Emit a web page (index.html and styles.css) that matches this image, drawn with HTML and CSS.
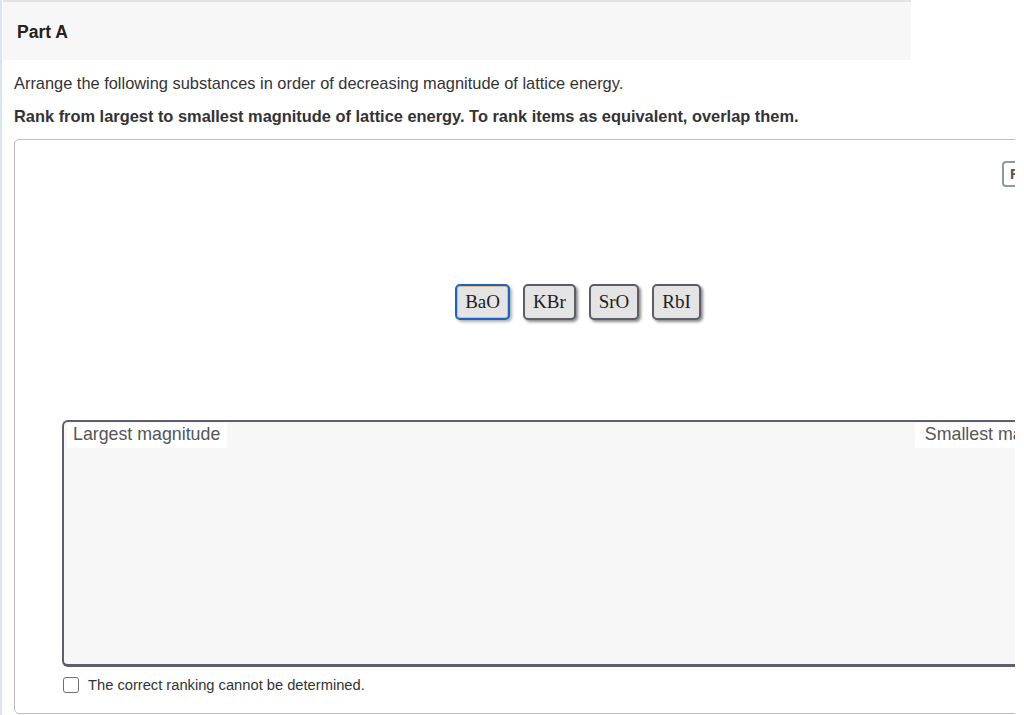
FILE: index.html
```html
<!DOCTYPE html>
<html>
<head>
<meta charset="utf-8">
<link rel="stylesheet" href="styles.css">
</head>
<body>
<div class="frame">
  <div class="part-header">Part A</div>
  <p class="prompt">Arrange the following substances in order of decreasing magnitude of lattice energy.</p>
  <p class="instr">Rank from largest to smallest magnitude of lattice energy. To rank items as equivalent, overlap them.</p>
  <div class="rank-box">
    <div class="toolbar"><span class="tool-btn">F</span></div>
    <div class="tiles">
      <span class="tile focused">BaO</span>
      <span class="tile">KBr</span>
      <span class="tile">SrO</span>
      <span class="tile">RbI</span>
    </div>
    <div class="dropzone">
      <span class="zlabel">Largest magnitude</span>
      <span class="zlabel right">Smallest magnitude</span>
    </div>
    <label class="check-row"><span class="checkbox"></span><span>The correct ranking cannot be determined.</span></label>
  </div>
</div>
</body>
</html>
```
FILE: styles.css
```css
html, body {
  margin: 0;
  padding: 0;
  background: #fff;
}
body {
  font-family: "Liberation Sans", Arial, sans-serif;
  color: #333;
}
.frame {
  width: 1013px;
  height: 715px;
  border-left: 2px solid #d9e6f2;
  overflow: hidden;
}
.part-header {
  margin-left: 1px;
  width: 894px;
  height: 58px;
  border-top: 2px solid #e4e4e4;
  background: #f7f7f7;
  padding-left: 14px;
  font-weight: bold;
  font-size: 17.5px;
  color: #222;
  line-height: 60px;
}
.prompt {
  margin: 13px 0 0 12px;
  font-size: 16.4px;
  line-height: 20px;
  color: #333;
}
.instr {
  margin: 13px 0 0 12px;
  font-size: 16.4px;
  line-height: 20px;
  font-weight: bold;
  color: #333;
}
.rank-box {
  margin: 13px 0 0 12px;
  width: 1126px;
  height: 573px;
  border: 1px solid #bdbdbd;
  border-radius: 5px;
  display: flex;
  flex-direction: column;
  align-items: flex-start;
}
.toolbar {
  margin-top: 21px;
  padding-left: 987px;
  height: 26px;
}
.tool-btn {
  display: inline-block;
  width: 22px;
  height: 22px;
  border: 2px solid #8c9a9a;
  border-radius: 4px;
  font-weight: bold;
  font-size: 15px;
  line-height: 22px;
  padding-left: 6px;
  color: #555;
  box-sizing: content-box;
}
.tiles {
  margin-top: 97px;
  align-self: stretch;
  display: flex;
  justify-content: center;
  gap: 13px;
}
.tile {
  display: inline-flex;
  align-items: center;
  height: 32px;
  padding: 0 8px;
  border: 2px solid #5d5d68;
  border-radius: 5px;
  background: #e4e4e4;
  box-shadow: 2px 2px 3px #8a8a8a;
  font-family: "Liberation Serif", "DejaVu Serif", serif;
  font-size: 19px;
  color: #1e1e1e;
}
.tile.focused {
  border: 2px solid #1764c8;
  box-shadow: inset 0 0 0 1px #e6b98a, 2px 2px 3px #b0b0b0;
}
.dropzone {
  margin: 100px 0 0 47px;
  width: 1030px;
  height: 242px;
  background: #f7f7f7;
  border: 2px solid #5e5e6e;
  border-bottom-width: 3px;
  border-right: none;
  border-radius: 6px 0 0 6px;
  display: flex;
  justify-content: space-between;
  align-items: flex-start;
}
.zlabel {
  margin: 1px 0 0 3px;
  padding: 0 7px 0 6px;
  height: 25px;
  line-height: 23px;
  background: #fff;
  font-size: 17.8px;
  color: #555;
}
.zlabel.right {
  margin: 1px 0 0 0;
  padding: 0 13px 0 10px;
}
.check-row {
  margin: 10px 0 0 48px;
  display: flex;
  align-items: center;
  gap: 9px;
  font-size: 14.7px;
  color: #333;
}
.checkbox {
  width: 14px;
  height: 14px;
  border: 1px solid #6f6f6f;
  border-radius: 3px;
  background: #fff;
}
```
